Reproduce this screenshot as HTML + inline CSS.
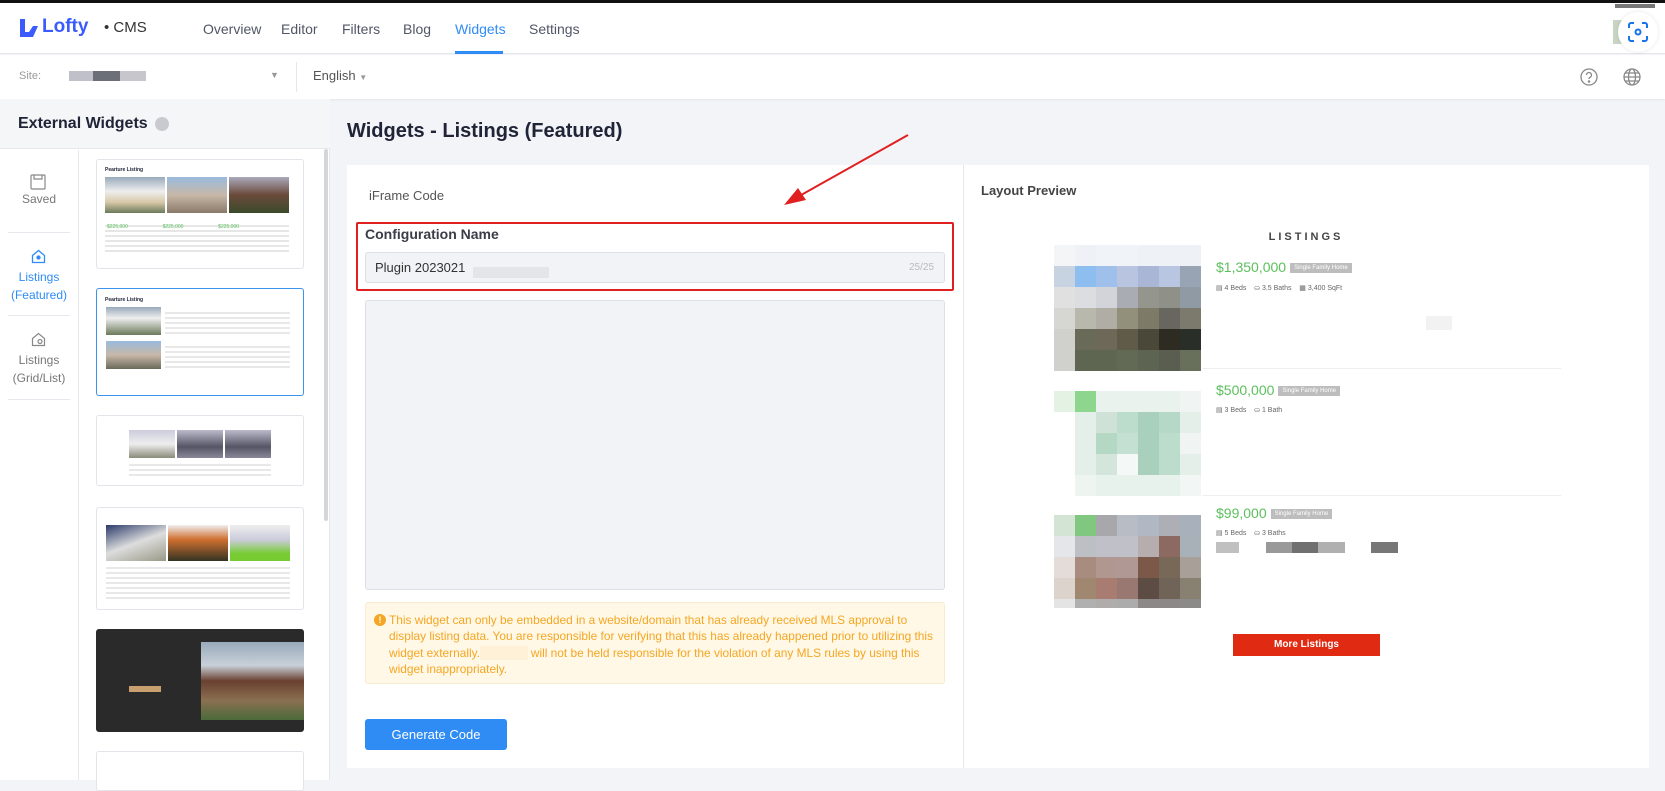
<!DOCTYPE html>
<html><head><meta charset="utf-8"><style>
*{box-sizing:border-box;margin:0;padding:0}
body{width:1665px;height:780px;overflow:hidden;background:#f3f4f7;font-family:"Liberation Sans",sans-serif;position:relative;color:#202437}
.a{position:absolute}
.nav{font-size:14px;color:#515666;top:21px}
.grid{display:grid;grid-template-columns:repeat(7,21px)}
.grid div{height:21px}
.tag{display:inline-block;background:#bdbdbd;color:#fff;font-size:6px;padding:2px 4px;vertical-align:middle;margin-left:4px}
.price{color:#5cbf5c;font-size:14px}
.meta{font-size:7px;color:#666}
.card{position:absolute;left:96px;width:208px;background:#fff;border:1px solid #e2e4ea;border-radius:3px}
.th{position:absolute;height:36px}
</style></head><body>
<div class="a" style="left:0;top:0;width:1665px;height:3px;background:#111"></div>
<div class="a" style="left:0;top:3px;width:1665px;height:51px;background:#fff;border-bottom:1px solid #e6e8ee"></div>
<svg class="a" style="left:19px;top:18px" width="20" height="20" viewBox="0 0 20 20"><path d="M1 1h5v13h4l4-6h5l-5 11H1z" fill="#3b5bfd"/></svg>
<div class="a" style="left:42px;top:16px;font-size:19px;font-weight:bold;color:#3b5bfd">Lofty</div>
<div class="a" style="left:104px;top:19px;font-size:15px;color:#333">• CMS</div>
<div class="a nav" style="left:203px">Overview</div>
<div class="a nav" style="left:281px">Editor</div>
<div class="a nav" style="left:342px">Filters</div>
<div class="a nav" style="left:403px">Blog</div>
<div class="a nav" style="left:455px;color:#2f8cf5">Widgets</div>
<div class="a nav" style="left:529px">Settings</div>
<div class="a" style="left:455px;top:51px;width:48px;height:3px;background:#2f8cf5"></div>
<div class="a" style="left:1615px;top:4px;width:40px;height:4px;background:#777"></div>
<div class="a" style="left:1613px;top:20px;width:22px;height:24px;background:#c8d4c4"></div>
<div class="a" style="left:1618px;top:12px;width:40px;height:40px;border-radius:50%;background:#fff;box-shadow:0 0 4px rgba(0,0,0,.1)"></div>
<svg class="a" style="left:1627px;top:21px" width="22" height="22" viewBox="0 0 22 22" fill="none" stroke="#1a73e8" stroke-width="2"><path d="M2 7V4a2 2 0 0 1 2-2h3M15 2h3a2 2 0 0 1 2 2v3M20 15v3a2 2 0 0 1-2 2h-3M7 20H4a2 2 0 0 1-2-2v-3"/><circle cx="11" cy="11" r="2.5"/></svg>
<div class="a" style="left:0;top:55px;width:1665px;height:44px;background:#fff;box-shadow:0 1px 3px rgba(0,0,0,.06)"></div>
<div class="a" style="left:19px;top:70px;font-size:11px;color:#999">Site:</div>
<div class="a" style="left:69px;top:71px;width:24px;height:10px;background:#c0c0c8"></div>
<div class="a" style="left:93px;top:71px;width:27px;height:10px;background:#6c6e78"></div>
<div class="a" style="left:120px;top:71px;width:26px;height:10px;background:#c6c6cc"></div>
<div class="a" style="left:270px;top:70px;font-size:9px;color:#999">▼</div>
<div class="a" style="left:296px;top:62px;width:1px;height:30px;background:#e6e8ee"></div>
<div class="a" style="left:313px;top:68px;font-size:13px;color:#555">English <span style="font-size:8px;color:#999">▼</span></div>
<svg class="a" style="left:1579px;top:67px" width="20" height="20" viewBox="0 0 20 20" fill="none" stroke="#888" stroke-width="1.3"><circle cx="10" cy="10" r="8"/><path d="M7.5 8a2.5 2.5 0 1 1 3.5 2.3c-.8.4-1 .9-1 1.7"/><circle cx="10" cy="14.5" r=".6" fill="#888"/></svg>
<svg class="a" style="left:1622px;top:67px" width="20" height="20" viewBox="0 0 20 20" fill="none" stroke="#888" stroke-width="1.3"><circle cx="10" cy="10" r="8"/><ellipse cx="10" cy="10" rx="3.5" ry="8"/><path d="M2 10h16M3.5 6h13M3.5 14h13"/></svg>
<div class="a" style="left:0;top:99px;width:330px;height:681px;background:#fff;border-right:1px solid #e6e8ee"></div>
<div class="a" style="left:0;top:99px;width:330px;height:50px;background:#f5f6f8;border-bottom:1px solid #e6e8ee"></div>
<div class="a" style="left:18px;top:115px;font-size:16px;font-weight:bold;color:#202437">External Widgets</div>
<div class="a" style="left:155px;top:117px;width:14px;height:14px;border-radius:50%;background:#c8cad0"></div>
<div class="a" style="left:78px;top:150px;width:1px;height:630px;background:#e6e8ee"></div>
<svg class="a" style="left:30px;top:174px" width="16" height="16" viewBox="0 0 16 16" fill="none" stroke="#888" stroke-width="1.2"><rect x="1" y="1" width="14" height="14" rx="1"/><path d="M4 1v4h8V1"/></svg>
<div class="a" style="left:0;top:192px;width:78px;text-align:center;font-size:12px;color:#777">Saved</div>
<div class="a" style="left:8px;top:232px;width:62px;height:1px;background:#e6e8ee"></div>
<svg class="a" style="left:31px;top:249px" width="15" height="15" viewBox="0 0 15 15" fill="none" stroke="#2f8cf5" stroke-width="1.3"><path d="M1.5 6.5L7.5 1.5l6 5V13.5h-12z"/><circle cx="7.5" cy="8.5" r="1.5" fill="#2f8cf5"/></svg>
<div class="a" style="left:0;top:268px;width:78px;text-align:center;font-size:12px;line-height:18px;color:#2f8cf5">Listings<br>(Featured)</div>
<div class="a" style="left:8px;top:315px;width:62px;height:1px;background:#e6e8ee"></div>
<svg class="a" style="left:31px;top:332px" width="15" height="15" viewBox="0 0 15 15" fill="none" stroke="#888" stroke-width="1.2"><path d="M1.5 6.5L7.5 1.5l6 5V13.5h-12z"/><circle cx="9" cy="9.5" r="2"/></svg>
<div class="a" style="left:0;top:351px;width:78px;text-align:center;font-size:12px;line-height:18px;color:#777">Listings<br>(Grid/List)</div>
<div class="a" style="left:8px;top:399px;width:62px;height:1px;background:#e6e8ee"></div>
<div class="a" style="left:324px;top:149px;width:4px;height:372px;background:#d4d6da;border-radius:2px"></div>
<div class="card" style="top:159px;height:110px">
 <div class="a" style="left:8px;top:7px;font-size:5px;font-weight:bold">Pearture Listing</div>
 <div class="th" style="left:8px;top:17px;width:60px;background:linear-gradient(#9ab 0,#eee 40%,#d8c8a8 70%,#6a7a5a)"></div>
 <div class="th" style="left:70px;top:17px;width:60px;background:linear-gradient(#9bd 0,#c8b8a8 50%,#8a7a6a)"></div>
 <div class="th" style="left:132px;top:17px;width:60px;background:linear-gradient(#aab 0,#6a4a3a 50%,#3a4a2a)"></div>
 <div class="a" style="left:8px;top:62px;width:184px;height:30px;background:repeating-linear-gradient(#fff 0 3px,#e6e6e6 3px 5px)"></div>
 <div class="a" style="left:10px;top:64px;font-size:5px;color:#5cbf5c">$225,000 &nbsp;&nbsp;&nbsp;&nbsp;&nbsp;&nbsp;&nbsp;&nbsp;&nbsp;&nbsp;&nbsp;&nbsp;&nbsp;&nbsp;&nbsp;&nbsp;&nbsp;&nbsp;&nbsp;&nbsp;&nbsp;&nbsp;&nbsp;&nbsp;$225,000 &nbsp;&nbsp;&nbsp;&nbsp;&nbsp;&nbsp;&nbsp;&nbsp;&nbsp;&nbsp;&nbsp;&nbsp;&nbsp;&nbsp;&nbsp;&nbsp;&nbsp;&nbsp;&nbsp;&nbsp;&nbsp;&nbsp;&nbsp;&nbsp;$225,000</div>
</div>
<div class="card" style="top:288px;height:108px;border:1.5px solid #3a94f0">
 <div class="a" style="left:8px;top:8px;font-size:5px;font-weight:bold">Pearture Listing</div>
 <div class="th" style="left:9px;top:18px;width:55px;height:28px;background:linear-gradient(#9ab 0,#eee 40%,#6a7a5a)"></div>
 <div class="th" style="left:9px;top:52px;width:55px;height:28px;background:linear-gradient(#9bd 0,#c8b8a8 50%,#6a6a5a)"></div>
 <div class="a" style="left:68px;top:20px;width:125px;height:26px;background:repeating-linear-gradient(#fff 0 3px,#e8e8e8 3px 5px)"></div>
 <div class="a" style="left:68px;top:54px;width:125px;height:26px;background:repeating-linear-gradient(#fff 0 3px,#e8e8e8 3px 5px)"></div>
</div>
<div class="card" style="top:415px;height:71px">
 <div class="th" style="left:32px;top:14px;width:46px;height:28px;background:linear-gradient(#ccd 0,#eee 50%,#8a8a7a)"></div>
 <div class="th" style="left:80px;top:14px;width:46px;height:28px;background:linear-gradient(#bbc 0,#556 60%,#889)"></div>
 <div class="th" style="left:128px;top:14px;width:46px;height:28px;background:linear-gradient(#bbc 0,#556 60%,#889)"></div>
 <div class="a" style="left:32px;top:45px;width:142px;height:16px;background:repeating-linear-gradient(#fff 0 3px,#e8e8e8 3px 5px)"></div>
</div>
<div class="card" style="top:507px;height:103px">
 <div class="th" style="left:9px;top:17px;width:60px;height:36px;background:linear-gradient(160deg,#2a3a6a,#ddd 50%,#998)"></div>
 <div class="th" style="left:71px;top:17px;width:60px;height:36px;background:linear-gradient(#eee 0,#d07030 40%,#332)"></div>
 <div class="th" style="left:133px;top:17px;width:60px;height:36px;background:linear-gradient(#eee 0,#ccd 40%,#7c3 80%)"></div>
 <div class="a" style="left:9px;top:56px;width:184px;height:36px;background:repeating-linear-gradient(#fff 0 3px,#e8e8e8 3px 5px)"></div>
</div>
<div class="card" style="top:629px;height:103px;background:#2a2a2a;border-color:#2a2a2a">
 <div class="a" style="left:104px;top:12px;width:103px;height:78px;background:linear-gradient(#9ab 0,#c8d0d8 30%,#6a4030 50%,#8a7050 75%,#4a6a3a)"></div>
 <div class="a" style="left:32px;top:56px;width:32px;height:6px;background:#c8a070"></div>
</div>
<div class="card" style="top:751px;height:40px"></div>
<div class="a" style="left:347px;top:120px;font-size:20px;font-weight:bold;color:#202437">Widgets - Listings (Featured)</div>
<div class="a" style="left:347px;top:165px;width:1302px;height:603px;background:#fff"></div>
<div class="a" style="left:963px;top:165px;width:1px;height:603px;background:#e6e8ee"></div>
<div class="a" style="left:369px;top:188px;font-size:13px;color:#555">iFrame Code</div>
<div class="a" style="left:356px;top:222px;width:598px;height:69px;border:2px solid #e02020;border-radius:2px"></div>
<div class="a" style="left:365px;top:226px;font-size:14px;font-weight:bold;color:#3a3d48">Configuration Name</div>
<div class="a" style="left:365px;top:252px;width:580px;height:31px;background:#f2f3f6;border:1px solid #dcdfe6;border-radius:3px"></div>
<div class="a" style="left:375px;top:260px;font-size:13px;color:#333">Plugin 2023021</div>
<div class="a" style="left:473px;top:267px;width:76px;height:11px;background:#e4e5e8"></div>
<div class="a" style="left:909px;top:262px;font-size:10px;color:#bbb">25/25</div>
<div class="a" style="left:365px;top:300px;width:580px;height:290px;background:#f2f3f6;border:1px solid #dcdfe6;border-radius:3px"></div>
<div class="a" style="left:365px;top:602px;width:580px;height:82px;background:#fff8e6;border:1px solid #f8ecd0;border-radius:3px"></div>
<div class="a" style="left:374px;top:614px;width:12px;height:12px;border-radius:50%;background:#f5a623;color:#fff;font-size:9px;font-weight:bold;text-align:center;line-height:12px">!</div>
<div class="a" style="left:389px;top:612px;width:556px;font-size:11.9px;line-height:16.3px;color:#f5a623">This widget can only be embedded in a website/domain that has already received MLS approval to display listing data. You are responsible for verifying that this has already happened prior to utilizing this widget externally.<span style="background:#fff0d8;color:#fff0d8">xxxxxxxx</span> will not be held responsible for the violation of any MLS rules by using this widget inappropriately.</div>
<div class="a" style="left:365px;top:719px;width:142px;height:31px;background:#2f8cf5;border-radius:3px;color:#fff;font-size:13px;text-align:center;line-height:31px">Generate Code</div>
<svg class="a" style="left:770px;top:125px" width="150" height="90"><line x1="138" y1="10" x2="24" y2="74" stroke="#e02020" stroke-width="2"/><path d="M14 80l22-5-8-12z" fill="#e02020"/></svg>
<div class="a" style="left:981px;top:183px;font-size:13px;font-weight:bold;color:#444">Layout Preview</div>
<div class="a" style="left:1206px;top:231px;width:200px;text-align:center;font-size:11px;font-weight:bold;letter-spacing:3px;color:#444">LISTINGS</div>
<div class="a grid" style="left:1054px;top:245px">
<div style="background:#f4f5f7"></div><div style="background:#eef2f6"></div><div style="background:#f0f3f7"></div><div style="background:#f0f3f7"></div><div style="background:#eef1f5"></div><div style="background:#eef1f5"></div><div style="background:#eef1f5"></div>
<div style="background:#c8d3e2"></div><div style="background:#8ebdf0"></div><div style="background:#9fc0ea"></div><div style="background:#b8c4e0"></div><div style="background:#aab6d6"></div><div style="background:#b8c6e2"></div><div style="background:#98a4b4"></div>
<div style="background:#e0e0e0"></div><div style="background:#dcdde0"></div><div style="background:#d3d4da"></div><div style="background:#a9acb2"></div><div style="background:#94958c"></div><div style="background:#8f9088"></div><div style="background:#909aa4"></div>
<div style="background:#d6d6d2"></div><div style="background:#b8b8ac"></div><div style="background:#b0aea4"></div><div style="background:#92907a"></div><div style="background:#7e7a68"></div><div style="background:#676760"></div><div style="background:#7c7a6c"></div>
<div style="background:#d0d0cc"></div><div style="background:#6a6a58"></div><div style="background:#6e6858"></div><div style="background:#605a48"></div><div style="background:#4a4838"></div><div style="background:#2e2c22"></div><div style="background:#2a2e28"></div>
<div style="background:#d0d0cc"></div><div style="background:#5e6652"></div><div style="background:#5e6652"></div><div style="background:#626a56"></div><div style="background:#5e6452"></div><div style="background:#5a5e50"></div><div style="background:#68705c"></div>
</div>
<div class="a grid" style="left:1054px;top:391px">
<div style="background:#e4f2e4"></div><div style="background:#8ed68e"></div><div style="background:#eaf2ee"></div><div style="background:#eaf2ee"></div><div style="background:#eaf2ee"></div><div style="background:#eaf2ee"></div><div style="background:#f0f4f2"></div>
<div style="background:#fff"></div><div style="background:#e4efea"></div><div style="background:#d0e2d8"></div><div style="background:#bcdccc"></div><div style="background:#a8d0bc"></div><div style="background:#b6d8c6"></div><div style="background:#e4efea"></div>
<div style="background:#fff"></div><div style="background:#e4efea"></div><div style="background:#b4d8c4"></div><div style="background:#c4e0d2"></div><div style="background:#a8d0bc"></div><div style="background:#bcdccc"></div><div style="background:#f0f4f2"></div>
<div style="background:#fff"></div><div style="background:#e4efea"></div><div style="background:#d4e6dc"></div><div style="background:#f4f8f6"></div><div style="background:#a8d0bc"></div><div style="background:#bcdccc"></div><div style="background:#e4efea"></div>
<div style="background:#fff"></div><div style="background:#eef4f0"></div><div style="background:#e8f2ec"></div><div style="background:#e8f2ec"></div><div style="background:#e8f2ec"></div><div style="background:#e8f2ec"></div><div style="background:#f2f6f4"></div>
</div>
<div class="a grid" style="left:1054px;top:515px">
<div style="background:#d4e4d4"></div><div style="background:#80c880"></div><div style="background:#a8a8ac"></div><div style="background:#b8bcc4"></div><div style="background:#b0b8c4"></div><div style="background:#aeaeb6"></div><div style="background:#a8b0bc"></div>
<div style="background:#e4e6ea"></div><div style="background:#bcc0c4"></div><div style="background:#c0c0c8"></div><div style="background:#c0c0c8"></div><div style="background:#b6aeae"></div><div style="background:#8c6a62"></div><div style="background:#a8b0b8"></div>
<div style="background:#e4dcd8"></div><div style="background:#a88c80"></div><div style="background:#b09890"></div><div style="background:#b09894"></div><div style="background:#7c5848"></div><div style="background:#786858"></div><div style="background:#a8a098"></div>
<div style="background:#dcd4cc"></div><div style="background:#a08870"></div><div style="background:#a87c70"></div><div style="background:#987870"></div><div style="background:#5c4c44"></div><div style="background:#706458"></div><div style="background:#888070"></div>
<div style="background:#e4e4e4;height:9px"></div><div style="background:#b0b0b0;height:9px"></div><div style="background:#b0acac;height:9px"></div><div style="background:#acacac;height:9px"></div><div style="background:#8c8888;height:9px"></div><div style="background:#8c8888;height:9px"></div><div style="background:#8c8a88;height:9px"></div>
</div>
<div class="a" style="left:1203px;top:368px;width:358px;height:1px;background:#eee"></div>
<div class="a" style="left:1203px;top:495px;width:358px;height:1px;background:#eee"></div>
<div class="a" style="left:1216px;top:259px"><span class="price">$1,350,000</span><span class="tag">Single Family Home</span></div>
<div class="a meta" style="left:1216px;top:284px">▤ 4 Beds &nbsp;&nbsp; ⛀ 3.5 Baths &nbsp;&nbsp; ▦ 3,400 SqFt</div>
<div class="a" style="left:1426px;top:316px;width:26px;height:14px;background:#f2f2f2"></div>
<div class="a" style="left:1216px;top:382px"><span class="price">$500,000</span><span class="tag">Single Family Home</span></div>
<div class="a meta" style="left:1216px;top:406px">▤ 3 Beds &nbsp;&nbsp; ⛀ 1 Bath</div>
<div class="a" style="left:1216px;top:505px"><span class="price">$99,000</span><span class="tag">Single Family Home</span></div>
<div class="a meta" style="left:1216px;top:529px">▤ 5 Beds &nbsp;&nbsp; ⛀ 3 Baths</div>
<div class="a" style="left:1216px;top:542px;width:23px;height:11px;background:#c0c0c0"></div>
<div class="a" style="left:1266px;top:542px;width:26px;height:11px;background:#999"></div>
<div class="a" style="left:1292px;top:542px;width:26px;height:11px;background:#707070"></div>
<div class="a" style="left:1318px;top:542px;width:27px;height:11px;background:#b0b0b0"></div>
<div class="a" style="left:1371px;top:542px;width:27px;height:11px;background:#777"></div>
<div class="a" style="left:1233px;top:634px;width:147px;height:22px;background:#e02a12;color:#fff;font-size:10px;font-weight:bold;text-align:center;line-height:22px">More Listings</div>
</body></html>
